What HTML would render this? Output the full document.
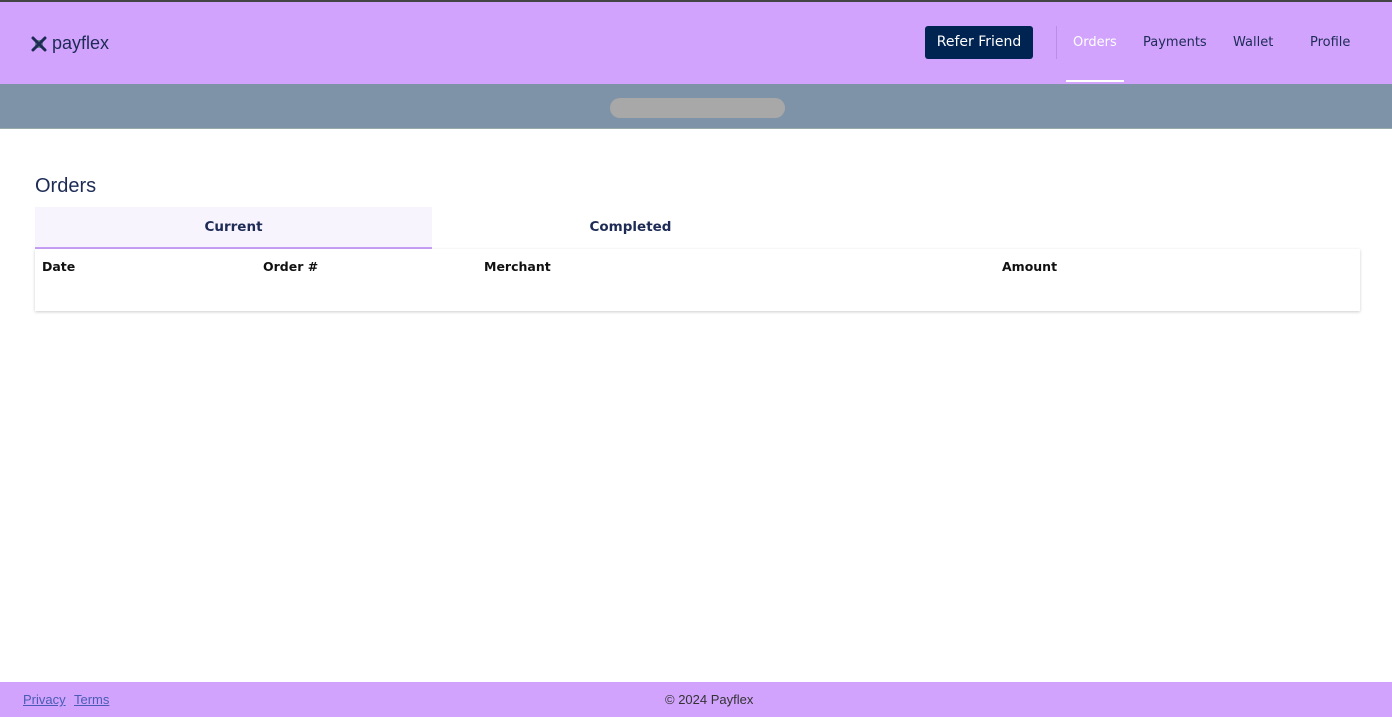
<!DOCTYPE html>
<html><head><style>
*{box-sizing:border-box;margin:0;padding:0}
body{width:1392px;height:717px;position:relative;background:#fff;font-family:"Liberation Sans",sans-serif;overflow:hidden}
.hdr{position:absolute;top:0;left:0;width:1392px;height:84px;background:#d1a3fd;border-top:2px solid #444}
.logo{position:absolute;left:30px;top:31px;display:flex;align-items:center;gap:4px;color:#1d2b55;font-size:18px}
.btn{position:absolute;left:925px;top:24px;width:108px;height:33px;background:#002452;border-radius:3px;color:#fff;line-height:33px;text-align:center;font-family:"DejaVu Sans",sans-serif;font-size:14px}
.sep{position:absolute;left:1056px;top:24px;width:1px;height:33px;background:#bb8ee6}
.nav{position:absolute;top:33px;font-family:"DejaVu Sans",sans-serif;font-size:13px;color:#1d2b55}
.bar{position:absolute;top:84px;left:0;width:1392px;height:45px;background:#7f93a8;border-bottom:1px solid #9aa}
.pill{position:absolute;left:610px;top:98px;width:175px;height:20px;border-radius:10px;background:#a8a8a8}
h1{position:absolute;left:35px;top:175px;font-weight:normal;font-size:20px;color:#1d2b55}
.tab{position:absolute;top:207px;height:42px;line-height:41px;text-align:center;font-family:"DejaVu Sans",sans-serif;font-weight:bold;font-size:13.5px;color:#1d2b55}
.card{position:absolute;left:35px;top:249px;width:1325px;height:62px;box-shadow:0 1px 3px rgba(0,0,0,.2);background:#fff}
.th{position:absolute;top:259px;font-family:"DejaVu Sans",sans-serif;font-weight:bold;font-size:12.5px;color:#111}
.ftr{position:absolute;top:682px;left:0;width:1392px;height:35px;background:#d1a3fd;font-size:13px;color:#333}
.ftr a{position:absolute;top:10px;color:#4a5cb5;text-decoration:underline}
</style></head><body>
<div class="hdr">
<div class="logo"><svg width="18" height="18" viewBox="0 0 18 18"><rect x="5" y="5" width="8" height="8" fill="#6a8a8a"/><path d="M3 3L15 15M15 3L3 15" stroke="#1d2b55" stroke-width="3" stroke-linecap="round"/></svg><span>payflex</span></div>
<div class="btn">Refer Friend</div>
<div class="sep"></div>
<div class="nav" style="left:1073px;color:#fff">Orders</div>
<div style="position:absolute;left:1066px;top:78px;width:58px;height:2px;background:#fff"></div>
<div class="nav" style="left:1143px">Payments</div>
<div class="nav" style="left:1233px">Wallet</div>
<div class="nav" style="left:1310px">Profile</div>
</div>
<div class="bar"></div><div class="pill"></div>
<h1>Orders</h1>
<div class="tab" style="left:35px;width:397px;background:#f8f4fe;border-bottom:2px solid #c9a0f7">Current</div>
<div class="tab" style="left:432px;width:397px">Completed</div>
<div class="card"></div>
<div class="th" style="left:42px">Date</div>
<div class="th" style="left:263px">Order #</div>
<div class="th" style="left:484px">Merchant</div>
<div class="th" style="left:1002px">Amount</div>
<div class="ftr"><a style="left:23px">Privacy</a><a style="left:74px">Terms</a><span style="position:absolute;left:665px;top:10px">© 2024 Payflex</span></div>
</body></html>
